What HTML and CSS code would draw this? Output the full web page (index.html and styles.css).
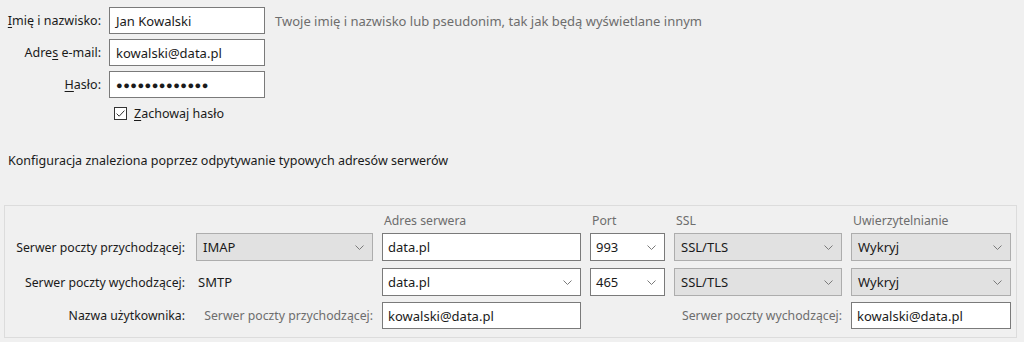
FILE: index.html
```
<!DOCTYPE html>
<html lang="pl">
<head>
<meta charset="utf-8">
<link rel="stylesheet" href="styles.css">
</head>
<body>
<div class="identity">
  <label class="lbl"><u>I</u>mię i nazwisko:</label>
  <div class="field">Jan Kowalski</div>
  <div class="hint">Twoje imię i nazwisko lub pseudonim, tak jak będą wyświetlane innym</div>
  <label class="lbl">Adre<u>s</u> e-mail:</label>
  <div class="field">kowalski@data.pl</div>
  <div></div>
  <label class="lbl"><u>H</u>asło:</label>
  <div class="field pass">●●●●●●●●●●●●●</div>
  <div></div>
  <div></div>
  <div class="check">
    <svg class="cbox" width="13" height="13" viewBox="0 0 13 13"><rect x="0.5" y="0.5" width="12" height="12" fill="#fff" stroke="#333"/><path d="M2.6 6.6 L5.2 9.2 L10.4 3.6" fill="none" stroke="#333" stroke-width="1"/></svg>
    <span><u>Z</u>achowaj hasło</span>
  </div>
</div>

<p class="status">Konfiguracja znaleziona poprzez odpytywanie typowych adresów serwerów</p>

<div class="group">
  <div class="grid">
    <div></div><div></div>
    <div class="head">Adres serwera</div>
    <div class="head">Port</div>
    <div class="head">SSL</div>
    <div class="head">Uwierzytelnianie</div>

    <div class="lbl r1 main">Serwer poczty przychodzącej:</div>
    <div class="sel r1"><span>IMAP</span><svg class="chev" width="9" height="5" viewBox="0 0 9 5"><path d="M0.5 0.5 L4.5 4.5 L8.5 0.5" fill="none" stroke="#7a7a7a"/></svg></div>
    <div class="field r1">data.pl</div>
    <div class="field combo r1"><span>993</span><svg class="chev" width="9" height="5" viewBox="0 0 9 5"><path d="M0.5 0.5 L4.5 4.5 L8.5 0.5" fill="none" stroke="#7a7a7a"/></svg></div>
    <div class="sel r1"><span>SSL/TLS</span><svg class="chev" width="9" height="5" viewBox="0 0 9 5"><path d="M0.5 0.5 L4.5 4.5 L8.5 0.5" fill="none" stroke="#7a7a7a"/></svg></div>
    <div class="sel r1"><span>Wykryj</span><svg class="chev" width="9" height="5" viewBox="0 0 9 5"><path d="M0.5 0.5 L4.5 4.5 L8.5 0.5" fill="none" stroke="#7a7a7a"/></svg></div>

    <div class="lbl r2 main">Serwer poczty wychodzącej:</div>
    <div class="plain r2">SMTP</div>
    <div class="field combo r2"><span>data.pl</span><svg class="chev" width="9" height="5" viewBox="0 0 9 5"><path d="M0.5 0.5 L4.5 4.5 L8.5 0.5" fill="none" stroke="#7a7a7a"/></svg></div>
    <div class="field combo r2"><span>465</span><svg class="chev" width="9" height="5" viewBox="0 0 9 5"><path d="M0.5 0.5 L4.5 4.5 L8.5 0.5" fill="none" stroke="#7a7a7a"/></svg></div>
    <div class="sel r2"><span>SSL/TLS</span><svg class="chev" width="9" height="5" viewBox="0 0 9 5"><path d="M0.5 0.5 L4.5 4.5 L8.5 0.5" fill="none" stroke="#7a7a7a"/></svg></div>
    <div class="sel r2"><span>Wykryj</span><svg class="chev" width="9" height="5" viewBox="0 0 9 5"><path d="M0.5 0.5 L4.5 4.5 L8.5 0.5" fill="none" stroke="#7a7a7a"/></svg></div>

    <div class="lbl r3 main">Nazwa użytkownika:</div>
    <div class="lbl dim r3">Serwer poczty przychodzącej:</div>
    <div class="field r3">kowalski@data.pl</div>
    <div class="lbl dim span2 r3">Serwer poczty wychodzącej:</div>
    <div class="field r3">kowalski@data.pl</div>
  </div>
</div>
</body>
</html>
```
FILE: styles.css
```
* { box-sizing: border-box; }
html, body {
  margin: 0;
  padding: 0;
  background: #f0f0f0;
  font-family: "Noto Sans", "Open Sans", sans-serif;
  font-size: 12.5px;
  color: #1a1a1a;
}
u { text-decoration-thickness: 1px; text-underline-offset: 2px; }

.identity {
  display: grid;
  grid-template-columns: 101px 156px auto;
  column-gap: 8px;
  row-gap: 5px;
  grid-template-rows: 27px 27px 27px 22px;
  padding-top: 7px;
  align-items: center;
}
.lbl {
  text-align: right;
  white-space: nowrap;
}
.field {
  background: #fff;
  border: 1px solid #7a7a7a;
  display: flex;
  align-items: center;
  padding: 0 8px 0 6px;
  white-space: nowrap;
  font-size: 13px;
}
.identity .field { height: 27px; }
.pass { font-size: 11px !important; letter-spacing: 0.5px; }
.hint {
  color: #6d6d6d;
  padding-left: 2px;
  white-space: nowrap;
  font-size: 13px;
}
.check {
  grid-column: 2 / 4;
  display: flex;
  align-items: center;
  gap: 7px;
  padding-left: 5px;
  align-self: start;
  height: 20px;
}
.cbox { display: block; }

.status {
  margin: 27px 0 0 8px;
  line-height: 18px;
}

.group {
  margin: 35px 0 0 4px;
  width: 1013px;
  height: 133px;
  border: 1px solid #dcdcdc;
  padding: 0 0 0 5px;
  font-size: 12.25px;
}
.grid {
  display: grid;
  grid-template-columns: 177px 177px 199px 75px 168px 160px;
  column-gap: 9px;
  grid-template-rows: 27px 28px 35px 33px;
}
.grid .field { padding-left: 5px; }
.head {
  align-self: end;
  color: #6d6d6d;
  line-height: 16px;
  padding: 0 0 4px 2px;
}
.r1, .r2, .r3 {
  align-self: end;
  display: flex;
  align-items: center;
}
.r1, .r2 { height: 28px; }
.r3 { height: 27px; }
.lbl.r1, .lbl.r2, .lbl.r3 { justify-content: flex-end; }
.lbl.main { padding-right: 2px; }
.sel {
  background: #e1e1e1;
  border: 1px solid #adadad;
  justify-content: space-between;
  padding: 0 8px 0 6px;
  font-size: 13px;
}
.combo { justify-content: space-between; }
.chev { display: block; }
.plain { padding-left: 2px; font-size: 13px; }
.dim { color: #6d6d6d; }
.span2 { grid-column: span 2; }
```
